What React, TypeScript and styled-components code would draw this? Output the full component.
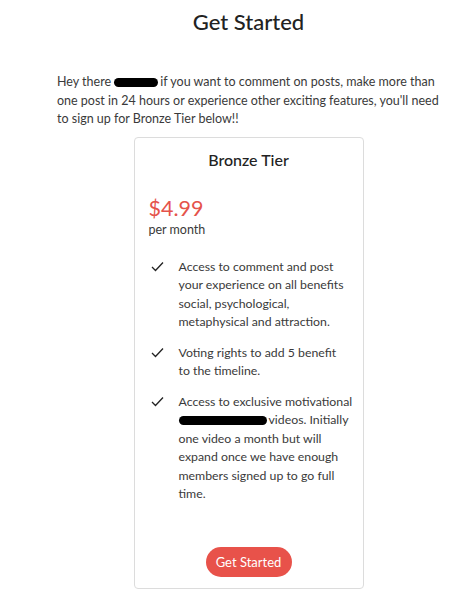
import React from "react";
import styled, { createGlobalStyle } from "styled-components";

const GlobalStyle = createGlobalStyle`
  body {
    margin: 0;
    background: #ffffff;
    font-family: Lato, "Open Sans", sans-serif;
    color: #333;
  }
`;

const Page = styled.div`
  display: flex;
  flex-direction: column;
  align-items: center;
  padding: 8px 0 0 23px;
`;

const Title = styled.h1`
  margin: 0;
  font-size: 22px;
  font-weight: 500;
  color: #222;
  line-height: 28px;
`;

const Intro = styled.p`
  align-self: flex-start;
  margin: 37px 0 0 34px;
  width: 386px;
  font-size: 12.5px;
  line-height: 18.5px;
  color: #3a3a3a;
`;

const Redact = styled.span<{ $w: number }>`
  display: inline-block;
  width: ${(p) => p.$w}px;
  height: 9px;
  background: #000;
  border-radius: 5px;
  vertical-align: middle;
  margin-right: 2px;
`;

const Card = styled.div`
  width: 230px;
  box-sizing: border-box;
  margin-top: 8px;
  border: 1px solid #dcdcdc;
  border-radius: 4px;
  padding: 11px 8px 11px 14px;
  display: flex;
  flex-direction: column;
`;

const TierName = styled.h2`
  margin: 0;
  padding-right: 6px;
  text-align: center;
  font-size: 16px;
  font-weight: 500;
  color: #222;
  line-height: 22px;
`;

const Price = styled.div`
  margin-top: 23px;
  font-size: 21.5px;
  line-height: 28px;
  color: #e5534b;
`;

const Period = styled.div`
  font-size: 12.5px;
  line-height: 16px;
  color: #3a3a3a;
`;

const Features = styled.ul`
  list-style: none;
  margin: 20px 0 0;
  padding: 0;
  display: flex;
  flex-direction: column;
  gap: 12px;
`;

const Feature = styled.li`
  display: flex;
  gap: 14px;
  font-size: 12.3px;
  line-height: 18.5px;
  color: #3a3a3a;
`;

const Check = styled.span`
  flex: none;
  width: 14px;
  padding-left: 2px;
  padding-top: 2px;
`;

const Action = styled.button`
  align-self: center;
  margin: 43px 6px 0 0;
  width: 86px;
  height: 30px;
  border: none;
  border-radius: 15px;
  background: #e8524a;
  color: #fff;
  font-family: Lato, "Open Sans", sans-serif;
  font-size: 13px;
`;

const CheckIcon = () => (
  <svg width="13" height="13" viewBox="0 0 13 13">
    <path d="M1 7 L4.5 10.5 L12 2.5" fill="none" stroke="#222" strokeWidth="1.3" />
  </svg>
);

export default function App() {
  return (
    <Page>
      <GlobalStyle />
      <Title>Get Started</Title>
      <Intro>
        Hey there <Redact $w={44} />if you want to comment on posts, make more than one post in 24
        hours or experience other exciting features, you'll need to sign up for Bronze Tier below!!
      </Intro>
      <Card>
        <TierName>Bronze Tier</TierName>
        <Price>$4.99</Price>
        <Period>per month</Period>
        <Features>
          <Feature>
            <Check><CheckIcon /></Check>
            <span>Access to comment and post your experience on all benefits social, psychological, metaphysical and attraction.</span>
          </Feature>
          <Feature>
            <Check><CheckIcon /></Check>
            <span>Voting rights to add 5 benefit<br />to the timeline.</span>
          </Feature>
          <Feature>
            <Check><CheckIcon /></Check>
            <span>
              Access to exclusive motivational <Redact $w={88} />videos. Initially one video a
              month but will expand once we have enough members signed up to go full time.
            </span>
          </Feature>
        </Features>
        <Action>Get Started</Action>
      </Card>
    </Page>
  );
}
